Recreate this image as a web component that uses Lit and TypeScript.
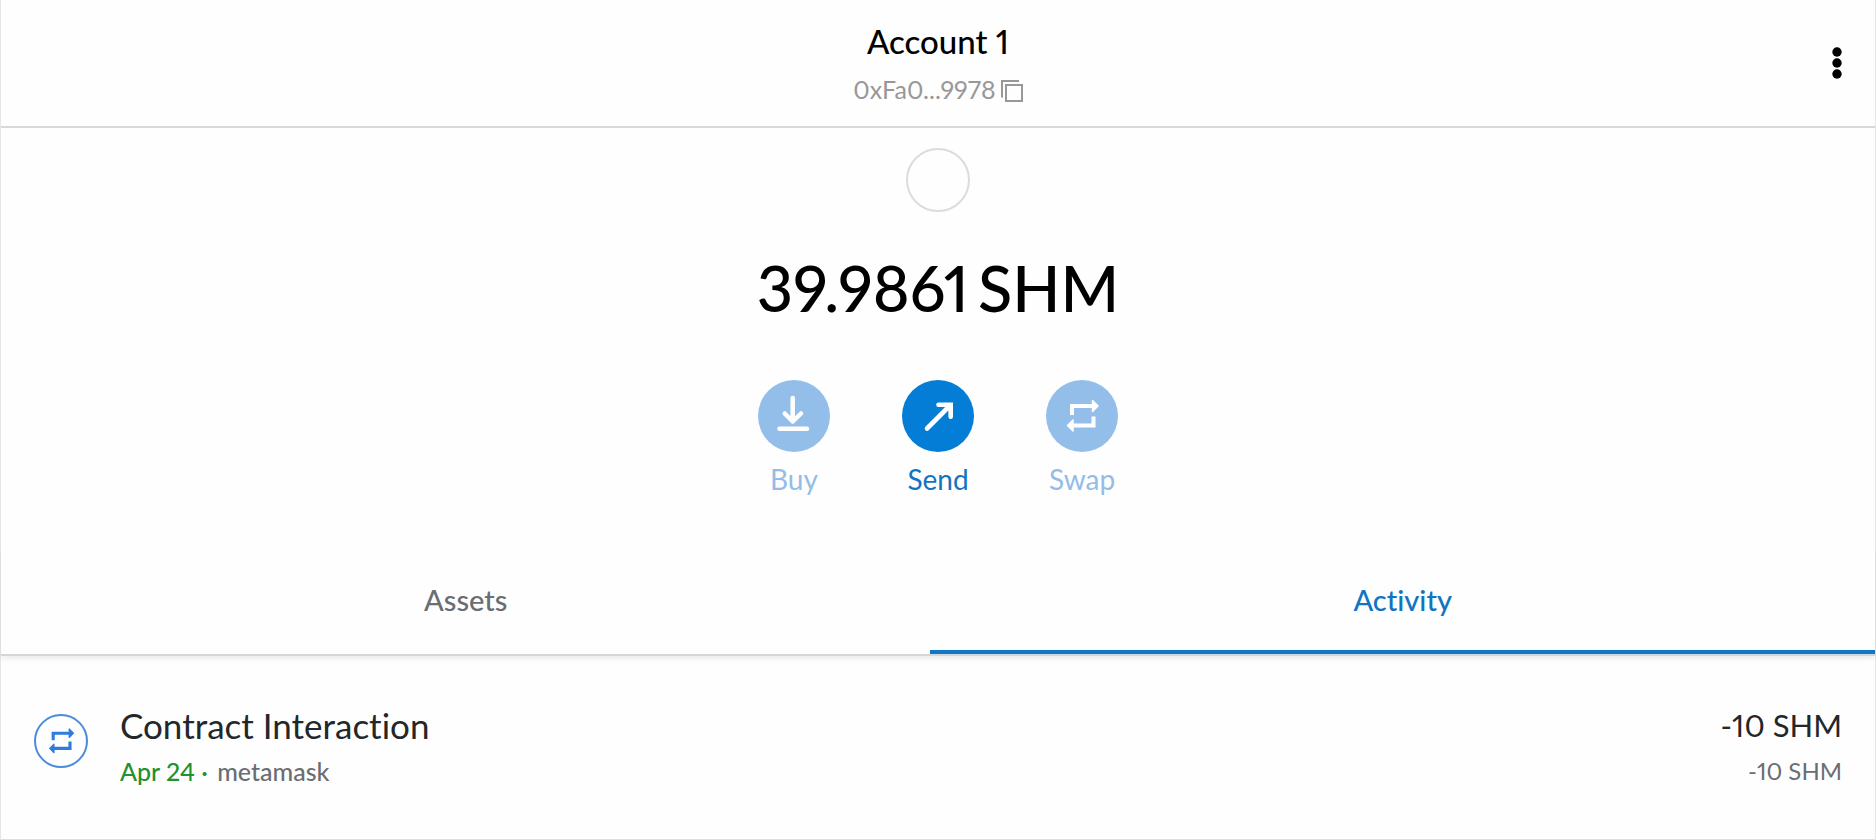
import { LitElement, html, svg, css } from "lit";
import { customElement, state } from "lit/decorators.js";

const swapPaths = svg`
  <path d="M26 35V26H48" fill="none" stroke="currentColor" stroke-width="4"/>
  <path d="M46.500 20.500L52 26L46.500 31.500Z" fill="currentColor" stroke="currentColor" stroke-width="1.500" stroke-linejoin="round"/>
  <path d="M47.500 36.500V45.500H26" fill="none" stroke="currentColor" stroke-width="4"/>
  <path d="M27 40L21.500 45.500L27 51Z" fill="currentColor" stroke="currentColor" stroke-width="1.500" stroke-linejoin="round"/>`;

const buyPaths = svg`
  <path d="M34.700 18V41.500M26.700 33.500L34.700 41.500L43 33.500M21.500 48.700H49" fill="none"
    stroke="currentColor" stroke-width="4.500" stroke-linecap="round" stroke-linejoin="round"/>`;

const sendPaths = svg`
  <path d="M25 48.500L48.500 25M36.500 24.700H48.700V36.700" fill="none"
    stroke="currentColor" stroke-width="4.600" stroke-linecap="round"/>`;

const actions = [
  { label: "Buy", icon: buyPaths, enabled: false },
  { label: "Send", icon: sendPaths, enabled: true },
  { label: "Swap", icon: swapPaths, enabled: false },
];

@customElement("app-root")
export class AppRoot extends LitElement {
  @state() private tab = "Activity";

  static styles = css`
    :host {
      display: block;
      box-sizing: border-box;
      min-height: 100vh;
      padding-bottom: 1px;
      background: #fefefe;
      font-family: Lato, "Open Sans", sans-serif;
      font-variant-ligatures: none;
      font-variant-numeric: proportional-nums;
      color: #000;
    }
    * { box-sizing: border-box; }
    button {
      margin: 0;
      padding: 0;
      border: 0;
      background: none;
      font: inherit;
      font-variant: inherit;
      color: inherit;
      cursor: pointer;
    }
    h1, h2, p { margin: 0; font-weight: 400; }
    .panel {
      border: 1px solid #e6e6e6;
      border-top: 0;
      border-bottom: 2px solid #dedede;
    }
    .bar {
      display: grid;
      grid-template-columns: 1fr auto 1fr;
      align-items: center;
      height: 128px;
      border-bottom: 2px solid #d8d8d8;
    }
    .account {
      grid-column: 2;
      display: flex;
      flex-direction: column;
      align-items: center;
      gap: 8px;
      padding-top: 4px;
    }
    .name { font-size: 33px; line-height: 40px; font-weight: 500; }
    .address {
      display: flex;
      align-items: center;
      gap: 5px;
      font-size: 25px;
      line-height: 40px;
      color: #989898;
    }
    .copy { display: block; width: 22px; height: 22px; margin-top: 3px; }
    .menu { justify-self: end; margin-right: 24px; width: 28px; height: 48px; }
    .menu svg { display: block; }
    .overview {
      display: flex;
      flex-direction: column;
      align-items: center;
      padding-top: 20px;
    }
    .token {
      width: 64px;
      height: 64px;
      border: 2px solid #dcdcdc;
      border-radius: 50%;
    }
    .balance {
      display: flex;
      gap: 9px;
      margin-top: 38px;
      font-size: 63px;
      line-height: 76px;
      font-weight: 500;
    }
    .actions { display: flex; gap: 72px; margin-top: 54px; }
    .action {
      display: flex;
      flex-direction: column;
      align-items: center;
      gap: 9px;
      width: 72px;
      font-size: 28px;
      line-height: 36px;
      color: #1174c2;
    }
    .disc {
      display: block;
      width: 72px;
      height: 72px;
      border-radius: 50%;
      background: #037dd6;
      color: #fff;
    }
    .action:disabled { color: #93bde8; cursor: default; }
    .action:disabled .disc { background: #93bee9; color: #fff; }
    .tabs {
      display: flex;
      margin-top: 51px;
      border-bottom: 2px solid #d4d6d8;
      box-shadow: 0 3px 5px rgba(0, 0, 0, 0.07);
    }
    .tab {
      flex: 1 1 auto;
      height: 106px;
      border-bottom: 4px solid transparent;
      font-size: 29px;
      font-weight: 500;
      color: #6a6e73;
    }
    .tab.active { color: #1174c2; border-bottom-color: #1076c8; }
    .row {
      display: flex;
      align-items: center;
      gap: 32px;
      padding: 47px 33px 48px;
      color: #24272a;
    }
    .badge {
      flex: none;
      align-self: flex-start;
      margin-top: 11px;
      width: 54px;
      height: 54px;
      border: 2px solid #4a8bdc;
      border-radius: 50%;
      color: #2f7be0;
    }
    .badge svg { display: block; width: 50px; height: 50px; }
    .details { flex: 1; }
    .amount { text-align: right; }
    .title { font-size: 35px; line-height: 44px; }
    .sub {
      margin-top: 4px;
      font-size: 25px;
      line-height: 40px;
      font-weight: 500;
      color: #6a6e73;
    }
    .date { margin-right: 3px; color: #23912c; }
    .amount .title { font-size: 31px; }
    .amount .sub { font-size: 24px; font-weight: 400; }
  `;

  render() {
    return html`
      <main class="panel">
        <header class="bar">
          <div class="account">
            <h1 class="name">Account 1</h1>
            <button class="address" title="Copy address">
              <span>0xFa0...9978</span>
              <svg class="copy" viewBox="0 0 22 22" fill="none" stroke="currentColor" stroke-width="2">
                <path d="M18 1H1V17.500"/><path d="M5 5H21V21H5Z"/>
              </svg>
            </button>
          </div>
          <button class="menu" aria-label="Account options">
            <svg viewBox="0 0 28 48" width="28" height="48">
              <circle cx="14" cy="13" r="4.700"/><circle cx="14" cy="24" r="4.700"/><circle cx="14" cy="35" r="4.700"/>
            </svg>
          </button>
        </header>
        <section class="overview">
          <div class="token"></div>
          <p class="balance"><span>39.9861</span><span>SHM</span></p>
          <div class="actions">
            ${actions.map((a) => html`
              <button class="action" ?disabled=${!a.enabled}>
                <svg class="disc" viewBox="0 0 72 72">${a.icon}</svg>
                <span>${a.label}</span>
              </button>`)}
          </div>
        </section>
        <nav class="tabs" role="tablist">
          ${["Assets", "Activity"].map((t) => html`
            <button role="tab" class="tab ${this.tab === t ? "active" : ""}"
              aria-selected=${this.tab === t} @click=${() => (this.tab = t)}>${t}</button>`)}
        </nav>
        <article class="row">
          <span class="badge"><svg viewBox="4 4 64 64">${swapPaths}</svg></span>
          <div class="details">
            <h2 class="title">Contract Interaction</h2>
            <p class="sub"><span class="date">Apr 24 ·</span> metamask</p>
          </div>
          <div class="amount">
            <p class="title">-10 SHM</p>
            <p class="sub">-10 SHM</p>
          </div>
        </article>
      </main>`;
  }
}
